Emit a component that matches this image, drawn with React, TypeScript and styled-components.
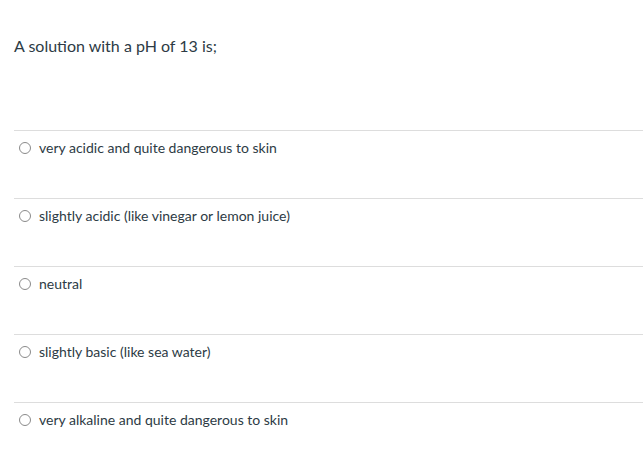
import * as React from 'react';
import styled, { createGlobalStyle } from 'styled-components';

const GlobalStyle = createGlobalStyle`
  html, body {
    margin: 0;
    padding: 0;
    background: #ffffff;
  }
  body {
    font-family: Lato, "Open Sans", sans-serif;
    color: #2d3b45;
  }
`;

const Question = styled.div`
  padding: 36px 0 0 14px;
`;

const Prompt = styled.div`
  font-size: 16px;
  line-height: 20px;
  color: #2d3b45;
  margin-bottom: 74px;
`;

const Answers = styled.div`
  display: flex;
  flex-direction: column;
`;

const Answer = styled.label`
  display: flex;
  align-items: center;
  gap: 8px;
  height: 67px;
  box-sizing: content-box;
  align-items: flex-start;
  border-top: 1px solid #dddddd;
  padding-top: 0;
  cursor: pointer;
`;

const Row = styled.div`
  display: flex;
  align-items: center;
  gap: 8px;
  margin-top: 7px;
  padding-left: 5px;
`;

const Radio = styled.span`
  display: inline-block;
  width: 10px;
  height: 10px;
  border: 1px solid #8a8a8a;
  border-radius: 50%;
  background: #fff;
  flex-shrink: 0;
`;

const AnswerText = styled.span`
  font-size: 14px;
  line-height: 20px;
  color: #2d3b45;
`;

const options = [
  'very acidic and quite dangerous to skin',
  'slightly acidic (like vinegar or lemon juice)',
  'neutral',
  'slightly basic (like sea water)',
  'very alkaline and quite dangerous to skin',
];

export default function App() {
  return (
    <>
      <GlobalStyle />
      <Question>
        <Prompt>A solution with a pH of 13 is;</Prompt>
        <Answers>
          {options.map((text) => (
            <Answer key={text}>
              <Row>
                <Radio />
                <AnswerText>{text}</AnswerText>
              </Row>
            </Answer>
          ))}
        </Answers>
      </Question>
    </>
  );
}
